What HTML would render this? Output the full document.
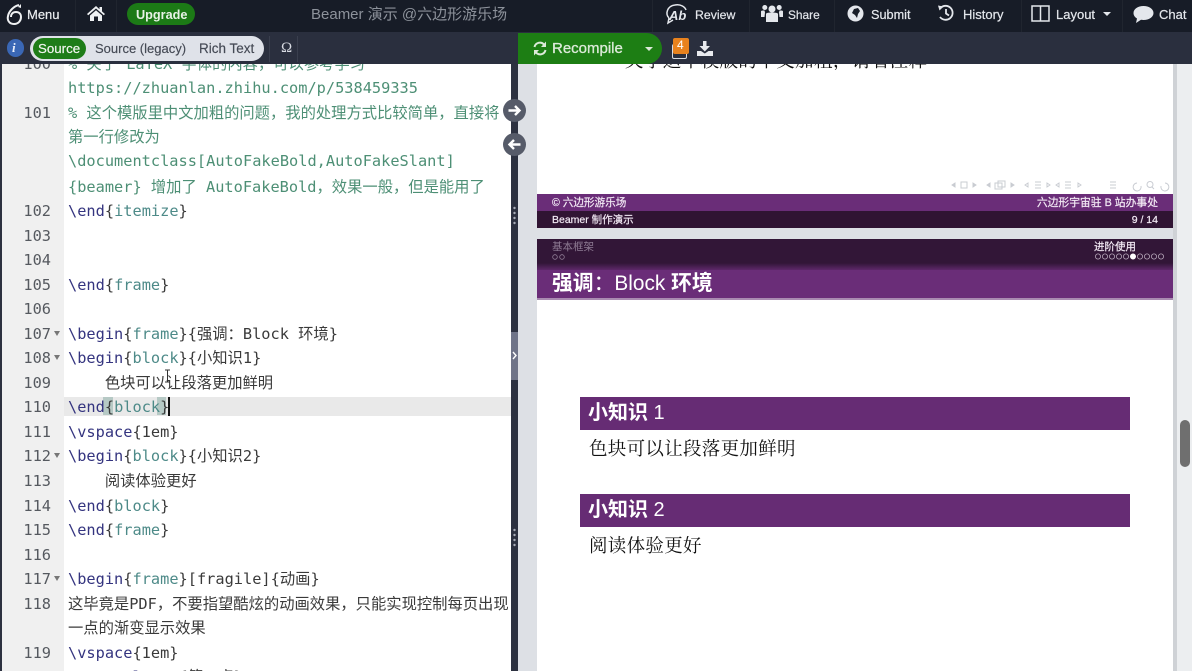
<!DOCTYPE html>
<html><head><meta charset="utf-8"><style>
html,body{margin:0;padding:0;width:1192px;height:671px;overflow:hidden;background:#fff}
body{position:relative;font-family:"Liberation Sans","Noto Sans CJK SC",sans-serif}
.a{position:absolute}
.t{position:absolute;white-space:nowrap}
.nav{color:#e4e7ec;font-size:13px;top:7px;line-height:16px;-webkit-text-stroke:.2px #e4e7ec}
.ln{position:absolute;left:2px;width:49px;text-align:right;font:15.3px/24px "DejaVu Sans Mono","Noto Sans CJK SC",monospace;color:#55595f;white-space:pre}
.cd{position:absolute;left:68px;font:15.3px/24px "DejaVu Sans Mono","Noto Sans CJK SC",monospace;color:#3a3a3a;white-space:pre}
.k{color:#34347f}.g{color:#4d8a88}.c{color:#4d8f75}
.fd{position:absolute;left:54px;width:0;height:0;border-left:3px solid transparent;border-right:3px solid transparent;border-top:5px solid #777}
.ft{-webkit-text-stroke:.2px #f3eaf5}
svg{position:absolute;overflow:visible}
</style></head><body>

<!-- editor -->
<div class="a" style="left:0;top:64px;width:2px;height:607px;background:#2c3140"></div>
<div class="a" style="left:2px;top:64px;width:62px;height:607px;background:#f0f0f0"></div>
<div class="a" style="left:64px;top:64px;width:447px;height:607px;background:#fff"></div>
<div class="a" style="left:64px;top:397px;width:447px;height:19px;background:#e9e9e9"></div>
<div class="a" style="left:103px;top:397px;width:10px;height:18px;background:#b6c9c5"></div>
<div class="a" style="left:157px;top:397px;width:9px;height:18px;background:#b6c9c5"></div>
<div class="a" style="left:168px;top:397px;width:1.5px;height:19px;background:#111"></div>

<div class="ln" style="top:52px">100</div>
<div class="cd c" style="top:52px">% 关于 LaTeX 字体的内容，可以参考学习</div>
<div class="cd c" style="top:76px">https://zhuanlan.zhihu.com/p/538459335</div>
<div class="ln" style="top:101px">101</div>
<div class="cd c" style="top:101px">% 这个模版里中文加粗的问题，我的处理方式比较简单，直接将</div>
<div class="cd c" style="top:125px">第一行修改为</div>
<div class="cd c" style="top:149px">\documentclass[AutoFakeBold,AutoFakeSlant]</div>
<div class="cd c" style="top:175px">{beamer} 增加了 AutoFakeBold，效果一般，但是能用了</div>
<div class="ln" style="top:199px">102</div><div class="cd" style="top:199px"><span class="k">\end</span>{<span class="g">itemize</span>}</div>
<div class="ln" style="top:224px">103</div>
<div class="ln" style="top:248px">104</div>
<div class="ln" style="top:273px">105</div><div class="cd" style="top:273px"><span class="k">\end</span>{<span class="g">frame</span>}</div>
<div class="ln" style="top:297px">106</div>
<div class="ln" style="top:322px">107</div><div class="fd" style="top:331px"></div><div class="cd" style="top:322px"><span class="k">\begin</span>{<span class="g">frame</span>}{强调：Block 环境}</div>
<div class="ln" style="top:346px">108</div><div class="fd" style="top:355px"></div><div class="cd" style="top:346px"><span class="k">\begin</span>{<span class="g">block</span>}{小知识1}</div>
<div class="ln" style="top:371px">109</div><div class="cd" style="top:371px">    色块可以让段落更加鲜明</div>
<div class="ln" style="top:395px">110</div><div class="cd" style="top:395px"><span class="k">\end</span>{<span class="g">block</span>}</div>
<div class="ln" style="top:420px">111</div><div class="cd" style="top:420px"><span class="k">\vspace</span>{1em}</div>
<div class="ln" style="top:444px">112</div><div class="fd" style="top:453px"></div><div class="cd" style="top:444px"><span class="k">\begin</span>{<span class="g">block</span>}{小知识2}</div>
<div class="ln" style="top:469px">113</div><div class="cd" style="top:469px">    阅读体验更好</div>
<div class="ln" style="top:494px">114</div><div class="cd" style="top:494px"><span class="k">\end</span>{<span class="g">block</span>}</div>
<div class="ln" style="top:518px">115</div><div class="cd" style="top:518px"><span class="k">\end</span>{<span class="g">frame</span>}</div>
<div class="ln" style="top:543px">116</div>
<div class="ln" style="top:567px">117</div><div class="fd" style="top:576px"></div><div class="cd" style="top:567px"><span class="k">\begin</span>{<span class="g">frame</span>}[fragile]{动画}</div>
<div class="ln" style="top:592px">118</div><div class="cd" style="top:592px">这毕竟是PDF，不要指望酷炫的动画效果，只能实现控制每页出现</div>
<div class="cd" style="top:616px">一点的渐变显示效果</div>
<div class="ln" style="top:641px">119</div><div class="cd" style="top:641px"><span class="k">\vspace</span>{1em}</div>
<div class="cd" style="top:665px">    <span class="k">\only</span>&lt;1&gt;{第一点}</div>

<!-- I-beam cursor -->
<svg style="left:164px;top:369px" width="8" height="15"><path d="M1 1h5M3.5 1v12M1 13h5" stroke="#333" stroke-width="1" fill="none"/></svg>

<!-- splitter -->
<div class="a" style="left:511px;top:64px;width:7px;height:607px;background:#2c3140"></div>
<div class="a" style="left:511px;top:332px;width:7px;height:48px;background:#6f7488"></div>
<svg style="left:511px;top:350px" width="7" height="12"><path d="M2 2l3 3.5-3 3.5" stroke="#fff" stroke-width="1.4" fill="none"/></svg>
<svg style="left:511px;top:205px" width="7" height="22"><g fill="#a9adb8"><circle cx="3.5" cy="3" r="1.2"/><circle cx="3.5" cy="8" r="1.2"/><circle cx="3.5" cy="13" r="1.2"/><circle cx="3.5" cy="18" r="1.2"/></g></svg>
<svg style="left:511px;top:527px" width="7" height="22"><g fill="#a9adb8"><circle cx="3.5" cy="3" r="1.2"/><circle cx="3.5" cy="8" r="1.2"/><circle cx="3.5" cy="13" r="1.2"/><circle cx="3.5" cy="18" r="1.2"/></g></svg>

<!-- pdf pane -->
<div class="a" style="left:518px;top:64px;width:674px;height:607px;background:#dde0e5"></div>
<div class="a" style="left:1173px;top:64px;width:19px;height:607px;background:#eceef0"></div>
<div class="a" style="left:1173px;top:64px;width:4px;height:607px;background:#cfd2d6"></div>
<div class="a" style="left:537px;top:64px;width:636px;height:164px;background:#fff"></div>
<div class="t" style="left:625px;top:50px;font:18.5px/20px 'Noto Serif CJK SC',serif;color:#111;letter-spacing:.4px;clip-path:inset(14px 0 0 0)">关于这个模版的中文加粗，请看注释</div>

<svg style="left:949px;top:180px" width="220" height="10" viewBox="0 0 220 10"><g fill="none" stroke="#c9ccd2" stroke-width="1">
<rect x="12" y="2" width="6" height="6"/><path d="M3 5l3-2v4zM27 5l-3-2v4z" fill="#c9ccd2"/>
<rect x="49" y="1" width="7" height="6"/><rect x="46" y="3" width="7" height="6"/><path d="M38 5l3-2v4zM65 5l-3-2v4z" fill="#c9ccd2"/>
<path d="M86 2h6M86 5h6M86 8h6M76 5l3-2v4zM101 5l-3-2v4z"/><path d="M116 2h6M116 5h6M116 8h6M107 5l3-2v4zM132 5l-3-2v4z"/><path d="M161 2h6M161 5h6M161 8h6"/>
<path d="M188 3a4 4 0 1 0 4 3"/><circle cx="201" cy="4.500" r="3"/><path d="M203 7l2 2"/><path d="M216 3a4 4 0 1 1-4 3"/></g></svg>

<div class="a" style="left:537px;top:194px;width:636px;height:17px;background:#6a2d78"></div>
<div class="a" style="left:537px;top:211px;width:636px;height:17px;background:#301433"></div>
<div class="t ft" style="left:552px;top:196px;font-size:10.6px;line-height:14px;color:#f3eaf5">© 六边形游乐场</div>
<div class="t ft" style="right:34px;top:196px;font-size:10.8px;line-height:14px;color:#f3eaf5">六边形宇宙驻 B 站办事处</div>
<div class="t ft" style="left:552px;top:213px;font-size:10.500px;line-height:14px;color:#f3eaf5">Beamer 制作演示</div>
<div class="t ft" style="right:34px;top:213px;font-size:10.500px;line-height:14px;color:#f3eaf5">9 / 14</div>

<!-- slide 2 -->
<div class="a" style="left:537px;top:239px;width:636px;height:432px;background:#fff"></div>
<div class="a" style="left:537px;top:239px;width:636px;height:24px;background:#321637"></div>
<div class="a" style="left:537px;top:263px;width:636px;height:7px;background:linear-gradient(#321637,#5d2869)"></div>
<div class="a" style="left:537px;top:270px;width:636px;height:28px;background:#6a2d78"></div>
<div class="a" style="left:537px;top:298px;width:636px;height:2px;background:#a98bb1"></div>
<div class="t" style="left:552px;top:240px;font-size:10.500px;line-height:14px;color:#8f7c94">基本框架</div>
<svg style="left:552px;top:254px" width="16" height="6"><g fill="none" stroke="#8f7c94" stroke-width=".8"><circle cx="3" cy="3" r="2.300"/><circle cx="10" cy="3" r="2.300"/></g></svg>
<div class="t ft" style="left:1094px;top:240px;font-size:10.500px;line-height:14px;color:#f3eaf5">进阶使用</div>
<svg style="left:1094px;top:253px" width="72" height="7"><g fill="none" stroke="#b5a6b8" stroke-width=".8"><circle cx="4" cy="3.500" r="2.600"/><circle cx="11" cy="3.500" r="2.600"/><circle cx="18" cy="3.500" r="2.600"/><circle cx="25" cy="3.500" r="2.600"/><circle cx="32" cy="3.500" r="2.600"/><circle cx="39" cy="3.500" r="2.600" fill="#fff" stroke="#fff"/><circle cx="46" cy="3.500" r="2.600"/><circle cx="53" cy="3.500" r="2.600"/><circle cx="60" cy="3.500" r="2.600"/><circle cx="67" cy="3.500" r="2.600"/></g></svg>
<div class="t" style="left:552px;top:270px;font-size:20.8px;line-height:27px;color:#fff"><b>强调</b>：Block <b>环境</b></div>

<div class="a" style="left:580px;top:397px;width:550px;height:33px;background:#662c74"></div>
<div class="t" style="left:588px;top:399px;font-size:20px;line-height:28px;color:#fff"><b>小知识</b> 1</div>
<div class="t" style="left:589px;top:435px;font:18.500px/26px 'Noto Serif CJK SC',serif;color:#111;letter-spacing:.3px">色块可以让段落更加鲜明</div>
<div class="a" style="left:580px;top:494px;width:550px;height:33px;background:#662c74"></div>
<div class="t" style="left:588px;top:496px;font-size:20px;line-height:28px;color:#fff"><b>小知识</b> 2</div>
<div class="t" style="left:589px;top:532px;font:18.500px/26px 'Noto Serif CJK SC',serif;color:#111;letter-spacing:.3px">阅读体验更好</div>

<div class="a" style="left:1180px;top:420px;width:10px;height:47px;border-radius:5px;background:#6f6f6f"></div>

<!-- top bar -->
<div class="a" style="left:0;top:0;width:1192px;height:32px;background:#171c27"></div>
<svg style="left:6px;top:3px" width="18" height="24" viewBox="0 0 18 24"><path d="M13 2C8 3 3 8 2 13c-1 4 1 8 6 8s7-4 7-7-2-5-5-5-5 2-5 5" fill="none" stroke="#eef0f2" stroke-width="2"/><path d="M15 1l-3 3 3 1z" fill="#eef0f2"/></svg>
<div class="t nav" style="left:27px;color:#eef0f2">Menu</div>
<svg style="left:86px;top:5px" width="20" height="17" viewBox="0 0 20 17"><path d="M10 1L1 9l1.200 1.300L10 3.500l7.800 6.800L19 9l-3-2.600V2h-2.500v2.200zM4 10.500V16h4v-4.500h4V16h4v-5.500L10 5.200z" fill="#eef0f2"/></svg>
<div class="a" style="left:127px;top:3px;width:68px;height:22px;border-radius:11px;background:#1c7a16"></div>
<div class="t" style="left:136px;top:7px;font-size:12.700px;line-height:16px;color:#e8f2e6;font-weight:700">Upgrade</div>
<div class="t" style="left:311px;top:6px;font-size:15px;line-height:18px;color:#8d929b">Beamer 演示 @六边形游乐场</div>

<svg style="left:664px;top:4px" width="26" height="20" viewBox="0 0 26 20"><path d="M5 14C1 10 3 2 11 1c6-1 10 2 11 5" fill="none" stroke="#e4e7ec" stroke-width="1.500"/><path d="M5 14l-1 5 5-3" fill="none" stroke="#e4e7ec" stroke-width="1.500"/></svg>
<div class="t" style="left:669px;top:9px;font-size:13px;line-height:14px;color:#e4e7ec;font-style:italic;font-weight:700">Ab</div>
<div class="t nav" style="left:695px;font-size:12.300px">Review</div>
<svg style="left:761px;top:4px" width="22" height="19" viewBox="0 0 22 19"><g fill="#e4e7ec"><circle cx="11" cy="5" r="3.500"/><circle cx="3.800" cy="3.500" r="2.500"/><circle cx="18.200" cy="3.500" r="2.500"/><path d="M5 10c0-1 2-1.500 6-1.500s6 .5 6 1.500v8H5zM0 7.500c0-1 1.500-1 3.500-1L4 8.500 3.500 13H0zM22 7.500c0-1-1.500-1-3.500-1L18 8.500l.5 4.500H22z"/></g></svg>
<div class="t nav" style="left:788px;font-size:11.900px">Share</div>
<svg style="left:847px;top:5px" width="17" height="17" viewBox="0 0 17 17"><circle cx="8.500" cy="8.500" r="8" fill="#e4e7ec"/><path d="M7 4l4-1 2 3-2 3-1 4-2-3-3-2z" fill="#171c27"/></svg>
<div class="t nav" style="left:871px;font-size:12.700px">Submit</div>
<svg style="left:937px;top:4px" width="18" height="18" viewBox="0 0 18 18"><path d="M3.500 4A7 7 0 1 1 3 13" fill="none" stroke="#e4e7ec" stroke-width="1.800"/><path d="M1 1.500l5.500 1-4 4z" fill="#e4e7ec"/><path d="M9 5v4.500l3 2" fill="none" stroke="#e4e7ec" stroke-width="1.800"/></svg>
<div class="t nav" style="left:963px">History</div>
<svg style="left:1031px;top:5px" width="19" height="17" viewBox="0 0 19 17"><path d="M1 1h17v15H1zM9.500 1v15" fill="none" stroke="#e4e7ec" stroke-width="1.500"/></svg>
<div class="t nav" style="left:1056px">Layout</div>
<div class="a" style="left:1103px;top:12px;width:0;height:0;border-left:4px solid transparent;border-right:4px solid transparent;border-top:4px solid #e4e7ec"></div>
<svg style="left:1133px;top:5px" width="21" height="19" viewBox="0 0 21 19"><path d="M10.500 1C5 1 .5 4 .5 8c0 2.500 1.500 4.300 3.500 5.500L3 18l5-3.200c.8.200 1.600.2 2.500.2C16 15 20.500 12 20.500 8S16 1 10.500 1z" fill="#e4e7ec"/></svg>
<div class="t nav" style="left:1159px">Chat</div>
<div class="a" style="left:75px;top:0;width:1px;height:32px;background:#20252f"></div>
<div class="a" style="left:116px;top:0;width:1px;height:32px;background:#20252f"></div>
<div class="a" style="left:652px;top:0;width:1px;height:32px;background:#20252f"></div>
<div class="a" style="left:749px;top:0;width:1px;height:32px;background:#20252f"></div>
<div class="a" style="left:834px;top:0;width:1px;height:32px;background:#20252f"></div>
<div class="a" style="left:1021px;top:0;width:1px;height:32px;background:#20252f"></div>
<div class="a" style="left:1122px;top:0;width:1px;height:32px;background:#20252f"></div>

<!-- toolbar -->
<div class="a" style="left:0;top:32px;width:1192px;height:32px;background:#2a2f3e"></div>
<div class="a" style="left:7px;top:39px;width:17px;height:18px;border-radius:9px;background:#3a67b5"></div>
<div class="t" style="left:12px;top:40px;font:italic 700 13px/16px 'Liberation Serif',serif;color:#e8eefa">i</div>
<div class="a" style="left:30px;top:36px;width:234px;height:25px;border-radius:13px;background:#dfe2e9"></div>
<div class="a" style="left:33px;top:38px;width:53px;height:21px;border-radius:11px;background:#1e7d18"></div>
<div class="t" style="left:38px;top:40px;font-size:13.300px;line-height:17px;color:#f0f5ee;-webkit-text-stroke:.2px #f0f5ee">Source</div>
<div class="t" style="left:95px;top:40px;font-size:13px;line-height:17px;color:#454a55;-webkit-text-stroke:.15px #454a55">Source (legacy)</div>
<div class="t" style="left:199px;top:40px;font-size:13.500px;line-height:17px;color:#454a55;-webkit-text-stroke:.15px #454a55">Rich Text</div>
<div class="a" style="left:269px;top:36px;width:1px;height:26px;background:#3a3f4e"></div>
<div class="a" style="left:297px;top:36px;width:1px;height:26px;background:#3a3f4e"></div>
<div class="t" style="left:281px;top:40px;font:15px/17px 'Liberation Serif',serif;color:#d8dbe2">Ω</div>

<div class="a" style="left:518px;top:33px;width:144px;height:31px;border-radius:0 16px 16px 0;background:#1d7e14"></div>
<svg style="left:533px;top:41px" width="14" height="15" viewBox="0 0 14 15"><path d="M1.500 6A5.500 5.500 0 0 1 11 3.500M12.500 9A5.500 5.500 0 0 1 3 11.500" fill="none" stroke="#dcead9" stroke-width="2"/><path d="M13 .5V6H8zM1 14.500V9h5z" fill="#dcead9"/></svg>
<div class="t" style="left:552px;top:39px;font-size:15px;line-height:19px;color:#dcead9;-webkit-text-stroke:.3px #dcead9">Recompile</div>
<div class="a" style="left:645px;top:47px;width:0;height:0;border-left:4px solid transparent;border-right:4px solid transparent;border-top:4px solid #dcead9"></div>
<div class="a" style="left:672px;top:44px;width:13px;height:13px;border:1.500px solid #d8dbe2;border-radius:2px"></div>
<div class="a" style="left:673px;top:38px;width:16px;height:16px;border-radius:2px;background:#e8821e"></div>
<div class="t" style="left:677px;top:38px;font-size:12px;line-height:15px;color:#fff">4</div>
<svg style="left:697px;top:41px" width="16" height="15" viewBox="0 0 16 15"><path d="M6 0h3.500v5H13L7.800 10.500 2.500 5H6zM0 10h4l3.800 2.500L11.500 10H16v5H0z" fill="#e8eaee"/></svg>

<!-- arrow buttons -->
<div class="a" style="left:503px;top:99px;width:23px;height:23px;border-radius:50%;background:#565b69"></div>
<svg style="left:507px;top:103px" width="15" height="15" viewBox="0 0 15 15"><path d="M1.500 7.500H12M8 3l4.500 4.500L8 12" fill="none" stroke="#fff" stroke-width="2.400"/></svg>
<div class="a" style="left:503px;top:133px;width:23px;height:23px;border-radius:50%;background:#565b69"></div>
<svg style="left:507px;top:137px" width="15" height="15" viewBox="0 0 15 15"><path d="M13.500 7.500H3M7 3L2.500 7.500 7 12" fill="none" stroke="#fff" stroke-width="2.400"/></svg>
</body></html>
